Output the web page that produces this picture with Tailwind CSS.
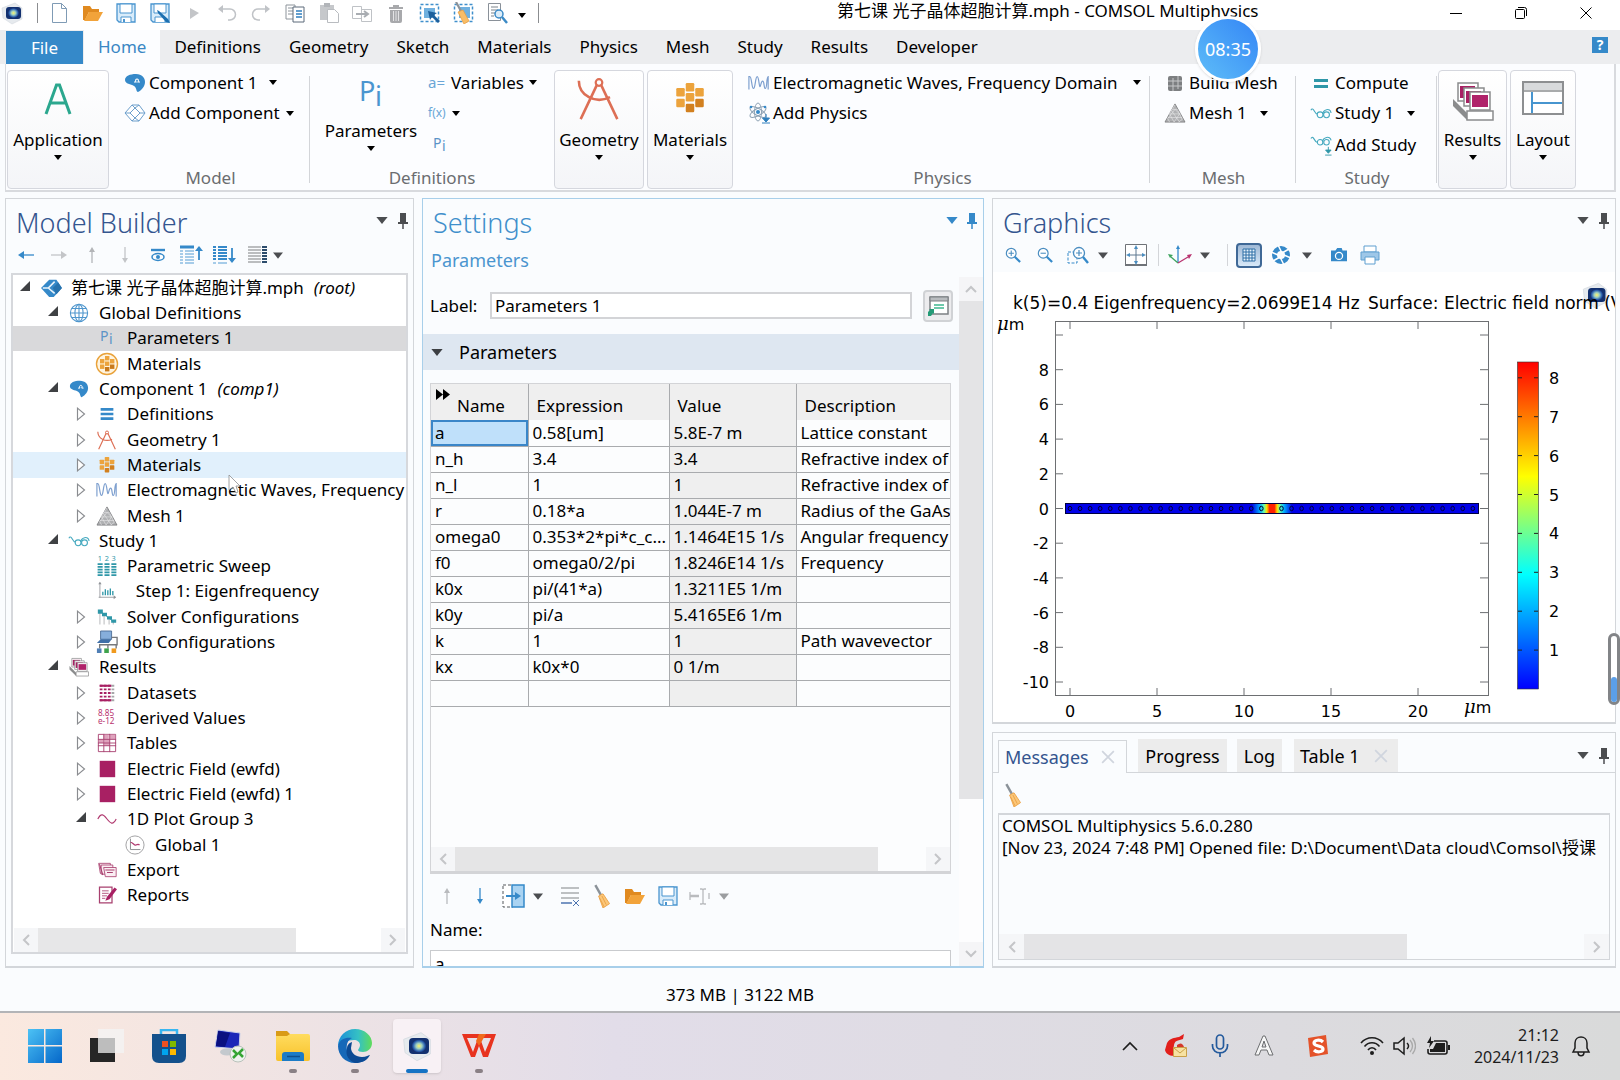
<!DOCTYPE html>
<html lang="en">
  <head>
    <meta charset="utf-8">
    <title>COMSOL Multiphysics</title>
    <script src="https://cdn.jsdelivr.net/npm/@tailwindcss/browser@4"></script>
  </head>

  <body class="relative min-h-screen flex flex-col overflow-x-hidden bg-[#fafcfe] text-black text-[17px] leading-[22px] font-['Noto_Sans','Noto_Sans_CJK_SC',sans-serif]">

    <!-- Gradients: kept out of the hidden sprite, they only paint from a rendered svg -->
    <svg class="absolute w-0 h-0">
      <defs>
        <linearGradient id="g-win" x1="0" y1="0" x2="1" y2="1"><stop offset="0" stop-color="#4cc2f5"/><stop offset="1" stop-color="#0567c9"/></linearGradient>
        <linearGradient id="g-edge" x1="0" y1="0" x2="1" y2="0"><stop offset="0" stop-color="#1b8fd8"/><stop offset="0.6" stop-color="#35c1c4"/><stop offset="1" stop-color="#5fdc5a"/></linearGradient>
        <linearGradient id="g-dir" x1="0" y1="0" x2="0" y2="1"><stop offset="0" stop-color="#ffdc5f"/><stop offset="1" stop-color="#f8c22b"/></linearGradient>
        <radialGradient id="g-core"><stop offset="0" stop-color="#fff36b"/><stop offset="0.4" stop-color="#9fd0c0"/><stop offset="0.8" stop-color="#2a5fb0"/><stop offset="1" stop-color="#14306e"/></radialGradient>
        <linearGradient id="g-jet" x1="0" y1="0" x2="0" y2="1">
          <stop offset="0" stop-color="#ff0000"/><stop offset="0.35" stop-color="#ffff00"/><stop offset="0.65" stop-color="#00ffff"/><stop offset="1" stop-color="#0000ff"/>
        </linearGradient>
        <linearGradient id="g-mode" x1="0" y1="0" x2="1" y2="0">
          <stop offset="0" stop-color="#0000e8"/><stop offset="0.2" stop-color="#00b0ff"/><stop offset="0.3" stop-color="#60ffb0"/><stop offset="0.37" stop-color="#ffe000"/><stop offset="0.44" stop-color="#ff2000"/>
          <stop offset="0.56" stop-color="#ff2000"/><stop offset="0.63" stop-color="#ffe000"/><stop offset="0.7" stop-color="#60ffb0"/><stop offset="0.8" stop-color="#00b0ff"/><stop offset="1" stop-color="#0000e8"/>
        </linearGradient>
      </defs>
    </svg>

    <!-- Icon sprite -->
    <svg class="hidden">
      <symbol id="caret" viewBox="0 0 8 5"><path d="M0 0h8L4 5z" fill="currentColor"/></symbol>
      <symbol id="pin" viewBox="0 0 12 16"><path d="M3 0h6v9h2v2H1V9h2z" fill="currentColor"/><path d="M6 11v5" stroke="currentColor" stroke-width="1.5"/></symbol>
      <symbol id="logo" viewBox="0 0 24 24"><path d="M2 7L15 2l7 5v11l-10 5L3 17z" fill="#e6eaee" stroke="#d3d9df" stroke-width=".6"/><rect x="6" y="6" width="15" height="12" rx="3" fill="#12306f"/><rect x="8" y="7" width="11" height="10" rx="2" fill="url(#g-core)"/></symbol>
      <symbol id="new" viewBox="0 0 22 22"><path d="M4.500 1.500h9l5 5v14h-14z" fill="#fff" stroke="#7f9bb5"/><path d="M13.500 1.500v5h5" fill="none" stroke="#7f9bb5"/></symbol>
      <symbol id="open" viewBox="0 0 22 22"><path d="M1 4h7l2 3h7v3H7l-4 8H1z" fill="#e08a20"/><path d="M7 10h14l-5 9H2z" fill="#f2a33a"/></symbol>
      <symbol id="save" viewBox="0 0 22 22"><path d="M2 2h18v18H4l-2-2z" fill="#d9ecfa" stroke="#4a95cf" stroke-width="1.300"/><path d="M5 2h12v9H5z" fill="#fff" stroke="#4a95cf"/><path d="M6 20v-5h10v5" fill="#fff" stroke="#4a95cf"/><path d="M8 17h2v3H8z" fill="#4a95cf"/></symbol>
      <symbol id="saveas" viewBox="0 0 22 22"><path d="M2 2h18v18H4l-2-2z" fill="#d9ecfa" stroke="#4a95cf" stroke-width="1.300"/><path d="M5 2h12v9H5z" fill="#fff" stroke="#4a95cf"/><path d="M6 20v-5h10v5" fill="#fff" stroke="#4a95cf"/><path d="M8 8l2 1 9 8 2 4-4-1-8-9z" fill="#1c6fb0"/></symbol>
      <symbol id="play" viewBox="0 0 22 22"><path d="M7 6l9 5-9 6z" fill="#c3c5c8"/></symbol>
      <symbol id="undo" viewBox="0 0 22 22"><path d="M3 7h11a5 5 0 0 1 0 11h-2" fill="none" stroke="#c0c3c7" stroke-width="1.500"/><path d="M7 3L2 7l5 4" fill="#c0c3c7"/></symbol>
      <symbol id="redo" viewBox="0 0 22 22"><path d="M19 7H8a5 5 0 0 0 0 11h2" fill="none" stroke="#c0c3c7" stroke-width="1.500"/><path d="M15 3l5 4-5 4" fill="#c0c3c7"/></symbol>
      <symbol id="copy" viewBox="0 0 22 22"><path d="M2 3h9v14H2z" fill="#fff" stroke="#8d949b"/><path d="M4 6h5M4 9h5M4 12h5" stroke="#8d949b"/><path d="M9 5h11v15H9z" fill="#fff" stroke="#5c6b7a"/><path d="M12 9h6M12 12h6M12 15h6" stroke="#2f7fbf" stroke-width="1.500"/></symbol>
      <symbol id="paste" viewBox="0 0 22 22"><path d="M2 3h14v15H2z" fill="#c6c8cb"/><path d="M6 1h6v4H6z" fill="#b2b5b9"/><path d="M9.500 7.500h7l4 4v9h-11z" fill="#fff" stroke="#b9bcc0"/></symbol>
      <symbol id="dup" viewBox="0 0 22 22"><path d="M1.500 4.500h9v12h-9zM10.500 7.500h10v12h-10z" fill="#fff" stroke="#bfc2c6"/><path d="M5 12h11M13 9l4 3-4 3" fill="none" stroke="#a9adb2" stroke-width="2"/></symbol>
      <symbol id="trash" viewBox="0 0 22 22"><path d="M4 5h14v2H4zM8 3h6v2H8z" fill="#a8a9ac"/><path d="M5 8h12v11a2 2 0 0 1-2 2H7a2 2 0 0 1-2-2z" fill="#a8a9ac"/><path d="M8.500 9v10M11 9v10M13.500 9v10" stroke="#e3e3e5"/></symbol>
      <symbol id="select" viewBox="0 0 22 22"><path d="M1.500 2.500h18v17h-18z" fill="#fff" stroke="#3f8fcc" stroke-width="1.500" stroke-dasharray="3 2"/><path d="M5 6h11v10H5z" fill="#6fb0df"/><path d="M9 9l9 2-3 2 6 6-2 2-6-6-2 3z" fill="#1c5f9c"/></symbol>
      <symbol id="clearsel" viewBox="0 0 22 22"><path d="M2.500 2.500h18v17h-18z" fill="#fff" stroke="#3f8fcc" stroke-width="1.500" stroke-dasharray="3 2"/><path d="M7 5h11v11H7z" fill="#6fb0df"/><path d="M4 0l5 9" stroke="#8b9299" stroke-width="2.200"/><path d="M6 10l5-2 6 11-5 3z" fill="#f9bd66" stroke="#eaa043" stroke-width=".8"/></symbol>
      <symbol id="find" viewBox="0 0 22 22"><path d="M2.500 1.500h12v17h-12z" fill="#fff" stroke="#8a9199"/><path d="M5 5h7M5 8h7M5 11h4M5 14h3" stroke="#7b838b"/><circle cx="13" cy="12" r="4" fill="#dcedf9" stroke="#3b8ac6" stroke-width="1.500"/><path d="M16 15l5 6" stroke="#3b8ac6" stroke-width="2.500"/></symbol>
      <symbol id="broom" viewBox="0 0 22 22"><path d="M4 1l5 9" stroke="#8b9299" stroke-width="2.200"/><path d="M7 11l4-2 6 9-6 4z" fill="#fbc77a" stroke="#eaa043" stroke-width=".8"/><path d="M8 13l4 8M10 11l4 8" stroke="#eaa043" stroke-width=".8"/></symbol>

      <symbol id="compasses" viewBox="0 0 24 24"><path d="M11 4L2 23M13 4l9 19" fill="none" stroke="#dd6f55" stroke-width="1.400"/><circle cx="12" cy="3" r="1.800" fill="none" stroke="#dd6f55" stroke-width="1.200"/><path d="M1 2c0 8 9 13 17 9" fill="none" stroke="#dd6f55" stroke-width="1.400"/></symbol>
      <symbol id="cubes" viewBox="0 0 24 24"><g fill="#eca33c"><rect x="8.600" y="0" width="6.800" height="6.800" rx="1"/><rect x="8.600" y="8" width="6.800" height="6.800" rx="1"/><rect x="1" y="4" width="6.800" height="6.800" rx="1"/><rect x="1" y="12.500" width="6.800" height="6.800" rx="1"/><rect x="16.200" y="4" width="6.800" height="6.800" rx="1"/></g><g fill="#d2801f"><rect x="16.200" y="12.500" width="6.800" height="6.800" rx="1"/><rect x="8.600" y="16.500" width="6.800" height="6.800" rx="1"/></g></symbol>
      <symbol id="globmat" viewBox="0 0 24 24"><circle cx="12" cy="12" r="10.500" fill="#fff4df" stroke="#e9a23a" stroke-width="1.400"/><g fill="#eca33c"><rect x="10" y="4" width="4.400" height="4.400"/><rect x="10" y="9.500" width="4.400" height="4.400"/><rect x="5" y="7" width="4.400" height="4.400"/><rect x="5" y="12.500" width="4.400" height="4.400"/><rect x="15" y="7" width="4.400" height="4.400"/></g><g fill="#c97a1c"><rect x="15" y="12.500" width="4.400" height="4.400"/><rect x="10" y="15" width="4.400" height="4.400"/></g></symbol>
      <symbol id="comp" viewBox="0 0 22 20"><path d="M1 7c0-4 5-6 11-6s9 4 9 8-3 8-7 10c-2 0-1-4-4-6S1 11 1 7z" fill="#3589c9"/><path d="M10 9h2c-2-4 4-4 2 0h2" fill="none" stroke="#fff" stroke-width="1.100"/></symbol>
      <symbol id="addcomp" viewBox="0 0 22 20"><path d="M1 10l7-8h7l6 8-6 8H8z" fill="#fff" stroke="#6d9fcc"/><path d="M1 10h5l5-5 5 5h5M6 10l5 5 5-5M8 2l3 3 4-3M8 18l3-3 4 3" fill="none" stroke="#6d9fcc"/></symbol>
      <symbol id="wave" viewBox="0 0 24 20"><path d="M1 17V3h1c2 0 2 13 4 13S8 3 10 3s2 11 3 11 1-6 3-6 1 8 3 8 1-13 3-13v14" fill="none" stroke="#7d9fcf" stroke-width="1.300"/></symbol>
      <symbol id="atom" viewBox="0 0 22 22"><g fill="none" stroke="#8fa3b5"><ellipse cx="10" cy="10" rx="3.500" ry="9"/><ellipse cx="10" cy="10" rx="3.500" ry="9" transform="rotate(60 10 10)"/><ellipse cx="10" cy="10" rx="3.500" ry="9" transform="rotate(120 10 10)"/></g><circle cx="10" cy="10" r="2" fill="#3589c9"/><circle cx="3" cy="5" r="1.300" fill="#3589c9"/><circle cx="17" cy="5" r="1.300" fill="#3589c9"/><path d="M18 12v6M14.500 16l3.500 4 3.500-4zM14 21h8" stroke="#2e7fbd" fill="#2e7fbd"/></symbol>
      <symbol id="brick" viewBox="0 0 22 20"><rect x="4" y="3" width="14" height="15" rx="2" fill="#7d7f81"/><path d="M4 8h14M4 13h14M9 5v13M14 3v13" stroke="#c7c8c9"/></symbol>
      <symbol id="mesh" viewBox="0 0 24 22"><path d="M12 1l11 20H1z" fill="#b0b1b3" stroke="#7f8082"/><path d="M9 7h6M6 12h12M4 16h16M12 2l-6 10 5 9 6-9-5-5-8 10 2 4M8 8l9 13M15 8l5 10-4 3" fill="none" stroke="#e6e6e7" stroke-width=".7"/></symbol>
      <symbol id="equals" viewBox="0 0 22 20"><path d="M4 7.500h14M4 13.500h14" stroke="#2f97a8" stroke-width="3"/></symbol>
      <symbol id="glasses" viewBox="0 0 24 20"><g fill="none" stroke="#45a9bf" stroke-width="1.200"><path d="M1 7c3-5 4 5 7 4"/><circle cx="11" cy="12" r="3.200"/><circle cx="18" cy="12" r="3.200"/><path d="M14 11c0-4 8-8 9-1"/></g></symbol>
      <symbol id="addstudy" viewBox="0 0 24 24"><g fill="none" stroke="#45a9bf" stroke-width="1.200"><path d="M1 5c3-5 4 5 7 4"/><circle cx="11" cy="9" r="3"/><circle cx="18" cy="9" r="3"/><path d="M14 8c0-4 8-7 9-1"/></g><path d="M20 14v5M17 17.500l3 3.500 3-3.500zM16.500 23h7" stroke="#2f97a8" fill="#2f97a8"/></symbol>
      <symbol id="results" viewBox="0 0 42 40"><path d="M1 18l14 14v7L1 25z" fill="#8b8c8d"/><path d="M15 30h26v9H15z" fill="#fff" stroke="#8b8c8d" stroke-width="1.500"/><path d="M6 2h20v18H6z" fill="#fff" stroke="#8b8c8d" stroke-width="1.500"/><path d="M8 5h15v12H8z" fill="#a82063"/><path d="M12 7h20v18H12z" fill="#fff" stroke="#8b8c8d" stroke-width="1.500"/><path d="M14 10h15v12H14z" fill="#a82063"/><path d="M18 11h20v18H18z" fill="#fff" stroke="#8b8c8d" stroke-width="1.500"/><path d="M20 14h16v12H20z" fill="#b0226a"/></symbol>
      <symbol id="layout" viewBox="0 0 42 34"><path d="M1 1h40v32H1z" fill="#fff" stroke="#8d8f91" stroke-width="2"/><path d="M2 2h38v7H2z" fill="#d8dadc"/><path d="M1 10h40" stroke="#8d8f91" stroke-width="1.500"/><path d="M10 11v21M10 22h30" stroke="#4795cf" stroke-width="2"/></symbol>

      <symbol id="root" viewBox="0 0 26 22"><path d="M2 11L11 2h8l6 9-9 10h-5z" fill="#3589c9"/><path d="M4 11h6l7-7M10 11l7 6" fill="none" stroke="#e8f3fb" stroke-width="1.800"/><path d="M15 11l6-6 4 6-6 7z" fill="#2772ad"/></symbol>
      <symbol id="globe" viewBox="0 0 22 22"><g fill="none" stroke="#4f96cd" stroke-width="1.200"><circle cx="11" cy="11" r="9.500"/><ellipse cx="11" cy="11" rx="4.500" ry="9.500"/><path d="M11 1.500v19M1.500 11h19M3 6h16M3 16h16"/></g></symbol>
      <symbol id="pi" viewBox="0 0 24 22"><text x="5" y="14" font-size="14" fill="#5b93c7">P</text><text x="14" y="17" font-size="14" fill="#5b93c7">i</text></symbol>
      <symbol id="defs" viewBox="0 0 22 22"><path d="M4 6h14M4 11h14M4 16h14" stroke="#3589c9" stroke-width="3"/></symbol>
      <symbol id="sweep" viewBox="0 0 24 24"><text x="2" y="7" font-size="8" fill="#2f97a8">1</text><text x="9.500" y="7" font-size="8" fill="#2f97a8">2</text><text x="17" y="7" font-size="8" fill="#2f97a8">3</text><path d="M4.500 9v14M12 9v14M19.500 9v14" stroke="#2f97a8" stroke-width="5.500" stroke-dasharray="1.800 1.200"/></symbol>
      <symbol id="eigen" viewBox="0 0 24 22"><path d="M3.500 1v18M2 18.500h20" stroke="#8f9296"/><path d="M20 16l3 2.500-3 2.500M1.500 3l2-3 2 3" fill="#8f9296"/><path d="M7 16v-4M10 16V9M13 16v-6M16 16V8M19 16v-5" stroke="#2f97a8" stroke-width="1.600"/></symbol>
      <symbol id="solver" viewBox="0 0 24 22"><path d="M3.500 4v16M8.500 8v12M14.500 12v8M19.500 16v4" stroke="#a9acb0"/><path d="M1 2h6v5H1zM6 6h6v4H6zM12 10h6v4h-6zM17 14h6v4h-6z" fill="#2f97a8"/><path d="M4 4l16 13" stroke="#2f97a8"/></symbol>
      <symbol id="job" viewBox="0 0 24 26"><path d="M5 1h12v9H5z" fill="#86aedb" stroke="#4e6f98"/><path d="M5 10h12l-3 4H1z" fill="#3f6fa8"/><path d="M17 8h6v8H4v4M13 16v4M22 16v4" fill="none" stroke="#77797c" stroke-width="1.500"/><path d="M1 20h5v5H1z" fill="#4f7fb5"/><path d="M9 20h5v5H9z" fill="#3fa34d"/><path d="M17 20h5v5h-5z" fill="#f09a1e"/></symbol>
      <symbol id="datasets" viewBox="0 0 22 22"><path d="M3 2h13v2H3zM3 18h13v2H3z" fill="#a82063"/><path d="M4.500 2v18M9 2v18M13.500 2v18" stroke="#a82063" stroke-width="3" stroke-dasharray="2 2"/><path d="M17.500 2v18" stroke="#a5a6a8" stroke-width="3" stroke-dasharray="2 2"/></symbol>
      <symbol id="derived" viewBox="0 0 24 22"><text x="2" y="9" font-size="9" fill="#b8326f">8.85</text><text x="2" y="18" font-size="9" fill="#b8326f">e-12</text></symbol>
      <symbol id="tables" viewBox="0 0 22 22"><path d="M1.500 1.500h19v19h-19z" fill="#fff" stroke="#a8406f"/><path d="M7 2h6v5H7zM2 7h5v4H2zM8 7h6v7H8zM14 2h6v5h-6z" fill="#dfa3bd"/><path d="M7.500 1v20M14 1v20M1 7h20M1 14h20M1 11h20" stroke="#a8406f"/></symbol>
      <symbol id="square" viewBox="0 0 22 22"><path d="M3 2h17v18H3z" fill="#a82063"/></symbol>
      <symbol id="sine" viewBox="0 0 24 22"><path d="M1 11c4-8 7-5 11 0s7 8 11 0" fill="none" stroke="#b0396f" stroke-width="1.400"/></symbol>
      <symbol id="global" viewBox="0 0 22 22"><circle cx="11" cy="11" r="10" fill="#fff" stroke="#9a9b9d"/><path d="M6 4v12h11" fill="none" stroke="#85878a"/><path d="M6 8c3 0 4 4 6 3s3-1 4 0" fill="none" stroke="#b0396f" stroke-width="1.300"/></symbol>
      <symbol id="export" viewBox="0 0 24 20"><g fill="#fbeef3" stroke="#a8406f"><path d="M2 2h14v12H4z"/><path d="M5 4h14v11H5z"/><path d="M8 7h15v11H10z"/></g><path d="M3 3l4 13M10 10h11M12 13h7" stroke="#a8406f" stroke-width="1.300"/></symbol>
      <symbol id="reports" viewBox="0 0 24 22"><path d="M3 1.500h15v19H3z" fill="#fff" stroke="#a8406f" stroke-width="1.500"/><path d="M6 6h8M6 9h8M6 12h6M6 15h4" stroke="#a8406f"/><path d="M10 18l2-5L21 2l3 2-9 12z" fill="#a82063"/></symbol>

      <symbol id="aleft" viewBox="0 0 18 18"><path d="M17 9H5" stroke="currentColor" stroke-width="1.300"/><path d="M7 5L1 9l6 4z" fill="currentColor"/></symbol>
      <symbol id="aup" viewBox="0 0 18 18"><path d="M9 17V4" stroke="currentColor" stroke-width="1.300"/><path d="M6 6l3-5 3 5z" fill="currentColor"/></symbol>
      <symbol id="eye" viewBox="0 0 18 18"><path d="M2 4h14" stroke="#3589c9" stroke-width="2.400"/><ellipse cx="9" cy="11" rx="6" ry="3.500" fill="none" stroke="#3589c9" stroke-width="1.500"/><circle cx="9" cy="11" r="2" fill="#3589c9"/></symbol>
      <symbol id="collapse" viewBox="0 0 24 20"><path d="M1 2h14" stroke="#3589c9" stroke-width="3"/><path d="M1 6h3M1 9h3M1 12h3M1 15h3M1 18h3M6 6h9M6 9h9M6 12h9M6 15h9M6 18h9" stroke="#8bbce2" stroke-width="1.500"/><path d="M20 15V4" stroke="#3589c9" stroke-width="1.800"/><path d="M16 6l4-5 4 5z" fill="#3589c9"/></symbol>
      <symbol id="expand" viewBox="0 0 24 20"><path d="M1 2h3M6 2h9M1 5h3M6 5h9M1 8h3M6 8h9M1 11h3M6 11h9M1 14h3M6 14h9" stroke="#3589c9" stroke-width="2"/><path d="M1 18h3M6 18h9" stroke="#8bbce2" stroke-width="1.500"/><path d="M20 3v12" stroke="#3589c9" stroke-width="1.800"/><path d="M16 13l4 5 4-5z" fill="#3589c9"/></symbol>
      <symbol id="cols" viewBox="0 0 22 20"><path d="M2 2h13M2 5h13M2 8h13M2 11h13M2 14h13M2 17h13" stroke="#a6a8aa" stroke-width="1.300"/><path d="M16 2h5M16 5h5M16 8h5M16 11h5M16 14h5M16 17h5" stroke="#2c4c6c" stroke-width="2"/></symbol>

      <symbol id="zoomin" viewBox="0 0 18 18"><circle cx="7" cy="7" r="5.500" fill="#fff" stroke="#4a8dc0" stroke-width="1.300"/><path d="M4 7h6M7 4v6" stroke="#4a8dc0" stroke-width="1.200"/><path d="M11 11l6 6" stroke="#3589c9" stroke-width="2.400"/></symbol>
      <symbol id="zoomout" viewBox="0 0 18 18"><circle cx="7" cy="7" r="5.500" fill="#fff" stroke="#4a8dc0" stroke-width="1.300"/><path d="M4 7h6" stroke="#4a8dc0" stroke-width="1.200"/><path d="M11 11l6 6" stroke="#3589c9" stroke-width="2.400"/></symbol>
      <symbol id="zoombox" viewBox="0 0 22 18"><path d="M1 6h9v11H1z" fill="none" stroke="#3589c9" stroke-dasharray="3 1.500"/><circle cx="12" cy="7" r="5.500" fill="#fff" stroke="#4a8dc0" stroke-width="1.300"/><path d="M9 7h6M12 4v6" stroke="#4a8dc0" stroke-width="1.200"/><path d="M16 11l5 6" stroke="#3589c9" stroke-width="2.400"/></symbol>
      <symbol id="extents" viewBox="0 0 22 22"><path d="M.5.500h21v21H.5z" fill="#fff" stroke="#6f7378"/><path d="M0 21h22" stroke="#6f7378" stroke-width="2"/><path d="M11 3v16M3 11h16" stroke="#5f7890"/><path d="M9 5l2-4 2 4zM9 17l2 4 2-4zM5 9l-4 2 4 2zM17 9l4 2-4 2z" fill="#4a8dc0"/></symbol>
      <symbol id="axes" viewBox="0 0 24 20"><path d="M10 18V3" stroke="#3589c9" stroke-width="1.300"/><path d="M8 4l2-4 2 4z" fill="#3589c9"/><path d="M10 18L3 12" stroke="#3da35d" stroke-width="1.300"/><path d="M0 9l5 1-3 3z" fill="#3da35d"/><path d="M10 18l10-6" stroke="#b8326f" stroke-width="1.300"/><path d="M24 9l-5 1 2 4z" fill="#b8326f"/></symbol>
      <symbol id="grid" viewBox="0 0 16 16"><path d="M2 2h12v12H2z" fill="#e7f2fb"/><path d="M2 2v12M5 2v12M8 2v12M11 2v12M14 2v12M2 2h12M2 5h12M2 8h12M2 11h12M2 14h12" stroke="#2c6ea6"/></symbol>
      <symbol id="aperture" viewBox="0 0 20 20"><circle cx="10" cy="10" r="6.500" fill="none" stroke="#3589c9" stroke-width="5"/><path d="M7 0l4 8M18 4l-7 4M20 13l-7-3M13 20l-4-8M2 16l7-4M0 7l7 3" stroke="#fff" stroke-width="1.500"/></symbol>
      <symbol id="camera" viewBox="0 0 20 18"><path d="M1 4h5l2-3h5l1 3h5v12H1z" fill="#3589c9"/><circle cx="10" cy="10" r="4" fill="#3589c9" stroke="#fff" stroke-width="1.400"/></symbol>
      <symbol id="printer" viewBox="0 0 20 20"><path d="M4 1h12v6H4z" fill="#fff" stroke="#5f9fd0"/><path d="M1 7h18v8H1z" fill="#9ec7e8" stroke="#5f9fd0"/><path d="M5 12h10v7H5z" fill="#fff" stroke="#5f9fd0"/></symbol>

      <symbol id="labelbtn" viewBox="0 0 22 22"><path d="M3 2h18v17H3z" fill="#fff" stroke="#7c8084" stroke-width="1.500"/><path d="M3 2h18v4H3z" fill="#b9bcbf" stroke="#7c8084"/><path d="M7 10h10M7 13h10" stroke="#3fb890" stroke-width="1.500"/><path d="M1 21v-4l2-2-1-1h5v5l-1-1-2 3z" fill="#249b77"/></symbol>
      <symbol id="moveto" viewBox="0 0 24 24"><path d="M2 1h10v22H2z" fill="#fff" stroke="#55585c" stroke-dasharray="3 2"/><path d="M11 1h12v22H11z" fill="#a9d3f2" stroke="#3589c9" stroke-width="1.500"/><path d="M5 12h10" stroke="#3589c9" stroke-width="2"/><path d="M14 8l6 4-6 4z" fill="#3589c9"/></symbol>
      <symbol id="clearrows" viewBox="0 0 22 20"><path d="M2 2h18M2 7h18M2 12h18" stroke="#a9acaf" stroke-width="1.500"/><path d="M2 17h11" stroke="#4d74b0" stroke-width="1.500"/><path d="M14 14l6 6M20 14l-6 6" stroke="#4d74b0"/></symbol>
      <symbol id="tidy" viewBox="0 0 22 20"><path d="M1 6v8M20 7v6" stroke="#b9bbbe" stroke-width="1.300"/><path d="M1 10h9" stroke="#b9bbbe" stroke-width="2.500"/><path d="M11 3h2l1 1 1-1h2M14 4v13M11 18h2l1-1 1 1h2" fill="none" stroke="#b9bbbe" stroke-width="1.300"/></symbol>

      <symbol id="w-start" viewBox="0 0 34 34"><path d="M0 0h16v16H0zM17.500 0H34v16H17.500zM0 17.500h16V34H0zM17.500 17.500H34V34H17.500z" fill="url(#g-win)"/></symbol>
      <symbol id="w-tasks" viewBox="0 0 34 34"><path d="M0 9h25v24H0z" fill="#262626"/><path d="M8 0h26v24H8z" fill="#f4f4f4" opacity=".8"/><path d="M8 9h17v15H8z" fill="#bdbdbd"/></symbol>
      <symbol id="w-store" viewBox="0 0 34 34"><path d="M9 5V1h16v4" fill="none" stroke="#38b6f1" stroke-width="2.500"/><path d="M0 5h34v22q0 7-7 7H7q-7 0-7-7z" fill="#14518c"/><path d="M10 12h6v6h-6z" fill="#f05022"/><path d="M18 12h6v6h-6z" fill="#7fba00"/><path d="M10 20h6v6h-6z" fill="#00a4ef"/><path d="M18 20h6v6h-6z" fill="#ffb900"/></symbol>
      <symbol id="w-rdp" viewBox="0 0 34 34"><path d="M4 1l22 3-1 16-24-2z" fill="#1a27b8" stroke="#c9d0e8"/><path d="M4 2l12 2-5 14-9-1z" fill="#0a1080"/><ellipse cx="13" cy="23" rx="7" ry="3.500" fill="#c4c9ce"/><circle cx="24" cy="25" r="8" fill="#eef2ee" stroke="#b9c2bb"/><path d="M19 21l4 4-4 4M29 20l-4 4 4 4" fill="none" stroke="#35a534" stroke-width="2.500"/></symbol>
      <symbol id="w-files" viewBox="0 0 34 30"><path d="M0 0h11l3 3h8v6H0z" fill="#d99b16"/><path d="M0 5h11l3-2h18q2 0 2 2v23q0 2-2 2H2q-2 0-2-2z" fill="url(#g-dir)"/><path d="M6 30v-6q0-3 3-3h16q3 0 3 3v6z" fill="#1c7bc6"/><path d="M11 25.500h13" stroke="#0e4f8c" stroke-width="1.500"/></symbol>
      <symbol id="w-edge" viewBox="0 0 34 34"><path d="M0 17C0 7 8 0 17 0c10 0 17 7 17 14 0 6-5 9-9 9-3 0-5-1-5-2 1-2 2-3 2-5 0-3-3-5-6-5C9 11 2 14 0 17z" fill="url(#g-edge)"/><path d="M0 17C2 9 9 8 14 9c-4 2-6 6-5 12 1 5 6 9 12 10 5 0 8-2 10-4-3 5-8 7-14 7C7 34 0 26 0 17z" fill="#1668b8"/><path d="M13 19c0 5 5 9 11 9 4 0 7-2 8-2-3 6-9 8-15 8-6-2-10-8-8-14 0-4 2-6 5-7z" fill="#0c4a94"/></symbol>
      <symbol id="w-wps" viewBox="0 0 34 24"><path d="M0 0h34l-8 23h-5l-4-11-4 11H9zM5 4l6 14 5-14zM18 4l5 14 6-14z" fill="#e8331f" fill-rule="evenodd"/><path d="M17 0h7l-7 12-3-5z" fill="#f06b1c"/></symbol>
      <symbol id="t-red" viewBox="0 0 22 24"><path d="M2 9c3-5 7-5 12-6l5-3-1 5c-7 2-8 2-9 6-1 5 1 9 4 10-6 2-12 0-13-5z" fill="#e21f1b"/><path d="M12 11q5-4 7 2h-7z" fill="#d4382c"/><path d="M8.500 13.500h13v9h-13z" fill="#f7e2a2" stroke="#c9a048"/><path d="M9 14l6 5 6-5" fill="none" stroke="#c9a048"/></symbol>
      <symbol id="t-mic" viewBox="0 0 18 24"><rect x="5.500" y="1" width="7" height="14" rx="3.500" fill="none" stroke="#245a9c" stroke-width="1.700"/><path d="M1.500 10v2c0 9 15 9 15 0v-2M9 19v4" fill="none" stroke="#245a9c" stroke-width="1.700"/></symbol>
      <symbol id="t-font" viewBox="0 0 20 22"><path d="M1 20L9 1h2l8 19h-4l-2-5H7l-2 5zM8 12h4l-2-6z" fill="#f7f7f7" stroke="#6c6e70"/></symbol>
      <symbol id="t-sogou" viewBox="0 0 24 24"><path d="M2 4l18-3 2 19-18 3z" fill="#e4532a"/><path d="M17 8c-3-3-9-2-9 1 0 4 9 2 9 6 0 3-6 4-9 1" fill="none" stroke="#fff" stroke-width="3.200"/></symbol>
      <symbol id="t-wifi" viewBox="0 0 24 20"><g fill="none" stroke="#1d1d1d" stroke-width="1.600"><path d="M1 7c6-7 16-7 22 0M4.500 10.500c4-5 11-5 15 0M8 14c2-3 6-3 8 0"/></g><circle cx="12" cy="17" r="2" fill="#1d1d1d"/></symbol>
      <symbol id="t-vol" viewBox="0 0 24 20"><path d="M2 7h4l6-5v16l-6-5H2z" fill="none" stroke="#1d1d1d" stroke-width="1.500"/><path d="M15 7q3 3 0 6" fill="none" stroke="#1d1d1d" stroke-width="1.500"/><path d="M18 4q5 6 0 12M20.500 2q6 8 0 16" fill="none" stroke="#a9a9a9" stroke-width="1.300"/></symbol>
      <symbol id="t-bat" viewBox="0 0 24 20"><path d="M8 5h11q2 0 2 2v9q0 2-2 2H4q-2 0-2-2v-3" fill="none" stroke="#1d1d1d" stroke-width="1.600"/><path d="M10 7h9v9H4v-3h3z" fill="#1d1d1d"/><path d="M22 9h2v5h-2z" fill="#1d1d1d"/><path d="M5 0L1 7h3l-1 5 5-7H5z" fill="#1d1d1d"/></symbol>
      <symbol id="t-bell" viewBox="0 0 20 22"><path d="M2 17l2-4V8c0-8 12-8 12 0v5l2 4zM7 17c0 5 6 5 6 0" fill="none" stroke="#1d1d1d" stroke-width="1.500"/></symbol>
    </svg>

    <!-- Title bar -->
    <header class="flex items-center h-[30px] bg-white">
      <svg class="w-6 h-6 -mt-1"><use href="#logo"/></svg>
      <span class="w-px h-5 ml-[13px] -mt-1 bg-[#8b8d90]"></span>
      <div id="quick" class="flex w-[472px] ml-1"></div>
      <button aria-label="More commands" class="w-4 flex justify-center"><svg class="w-2 h-[5px]"><use href="#caret"/></svg></button>
      <span class="w-px h-5 ml-2 -mt-1 bg-[#8b8d90]"></span>
      <h1 class="flex-1 pl-[298px] -mt-2 whitespace-nowrap">第七课 光子晶体超胞计算.mph - COMSOL Multiphysics</h1>
      <div class="flex -mt-1 mr-[2px]">
        <button aria-label="Minimize" class="w-[65px] flex justify-center"><svg class="w-3 h-3" viewBox="0 0 12 12"><path d="M0 6.500h12" stroke="#000"/></svg></button>
        <button aria-label="Restore" class="w-[65px] flex justify-center"><svg class="w-3 h-3" viewBox="0 0 12 12" fill="none" stroke="#000"><rect x=".5" y="2.500" width="9" height="9" rx="1"/><path d="M3 .5h6.500q2 0 2 2V9"/></svg></button>
        <button aria-label="Close" class="w-[65px] flex justify-center"><svg class="w-3 h-3" viewBox="0 0 12 12"><path d="M.5.500l11 11M11.500.5l-11 11" stroke="#000"/></svg></button>
      </div>
    </header>

    <!-- Ribbon tabs -->
    <nav class="flex items-stretch h-[34px] pl-[6px] bg-[#ecedef] leading-[32px]">
      <button class="w-[77px] mr-px mt-px bg-[#3589c9] text-white">File</button>
      <button class="px-[14px] bg-[#fcfdff] text-[#3a87c4]">Home</button>
      <button class="px-[14px]">Definitions</button>
      <button class="px-[14px]">Geometry</button>
      <button class="px-[14px]">Sketch</button>
      <button class="px-[14px]">Materials</button>
      <button class="px-[14px]">Physics</button>
      <button class="px-[14px]">Mesh</button>
      <button class="px-[14px]">Study</button>
      <button class="px-[14px]">Results</button>
      <button class="px-[14px]">Developer</button>
      <button aria-label="Help" class="ml-auto mr-3 mt-[7px] w-4 h-4 bg-[#3589c9] text-white text-sm leading-4 font-bold">?</button>
    </nav>

    <!-- Ribbon -->
    <section class="flex items-stretch h-32 ml-[5px] mr-1 pl-px pt-[6px] pb-px bg-[#fcfdff] border-l border-b-2 border-r-2 border-[#d8dade]">
      <button class="w-[102px] mr-px flex flex-col items-center pt-3 rounded border border-[#d5d7de] bg-linear-to-b from-white to-[#f4f5f8]">
        <svg class="w-8 h-8" viewBox="0 0 32 32"><path d="M4 31L14.500 2h3L28 31M8 20h16" fill="none" stroke="#2ba78e" stroke-width="3"/></svg>
        <span class="mt-[14px]">Application</span>
        <svg class="w-2 h-[5px] mt-1"><use href="#caret"/></svg>
      </button>

      <div class="w-[199px] flex flex-col pl-[14px]">
        <button class="flex items-center gap-[3px] h-[25px]"><svg class="w-[22px] h-5"><use href="#comp"/></svg>Component 1<svg class="w-2 h-[5px] ml-2"><use href="#caret"/></svg></button>
        <button class="flex items-center gap-[3px] h-9"><svg class="w-[22px] h-5"><use href="#addcomp"/></svg>Add Component<svg class="w-2 h-[5px] ml-[3px]"><use href="#caret"/></svg></button>
        <span class="mt-auto pr-3 text-center text-[#6b6d70]">Model</span>
      </div>
      <span class="w-px my-[6px] bg-[#d3d5d9]"></span>

      <div class="w-[244px] flex flex-col pl-4">
        <div class="flex">
          <button class="w-[90px] flex flex-col items-center pt-1">
            <svg class="w-8 h-10 overflow-visible" viewBox="0 0 32 40"><text x="4" y="27" font-size="27" fill="#4a95cf">P</text><text x="20" y="32" font-size="27" fill="#4a95cf">i</text></svg>
            <span class="mt-[6px]">Parameters</span>
            <svg class="w-2 h-[5px] mt-1"><use href="#caret"/></svg>
          </button>
          <div class="flex flex-col pl-[12px]">
            <button class="flex items-center gap-[5px] h-[25px]"><svg class="w-[18px] h-4 overflow-visible" viewBox="0 0 18 16"><text x="0" y="13" font-size="15" fill="#6aa6d6">a=</text></svg>Variables<svg class="w-2 h-[5px]"><use href="#caret"/></svg></button>
            <button aria-label="Functions" class="flex items-center gap-1 h-9"><svg class="w-5 h-4 overflow-visible" viewBox="0 0 20 16"><text x="0" y="12" font-size="12" fill="#6aa6d6">f(x)</text></svg><svg class="w-2 h-[5px]"><use href="#caret"/></svg></button>
            <button aria-label="Parameter case" class="flex items-center h-[27px]"><svg class="w-6 h-[22px]"><use href="#pi"/></svg></button>
          </div>
        </div>
        <span class="mt-auto pr-4 text-center text-[#6b6d70]">Definitions</span>
      </div>

      <button class="w-[90px] mr-[3px] flex flex-col items-center pt-[6px] rounded border border-[#d5d7de] bg-linear-to-b from-white to-[#f4f5f8]">
        <svg class="w-11 h-11"><use href="#compasses"/></svg>
        <span class="mt-2">Geometry</span>
        <svg class="w-2 h-[5px] mt-1"><use href="#caret"/></svg>
      </button>
      <button class="w-[86px] mr-[3px] flex flex-col items-center pt-3 rounded border border-[#d5d7de] bg-linear-to-b from-white to-[#f4f5f8]">
        <svg class="w-[30px] h-[30px]"><use href="#cubes"/></svg>
        <span class="mt-4">Materials</span>
        <svg class="w-2 h-[5px] mt-1"><use href="#caret"/></svg>
      </button>

      <div class="w-[413px] flex flex-col pl-3">
        <button class="flex items-center gap-[3px] h-[25px] whitespace-nowrap"><svg class="w-[22px] h-5"><use href="#wave"/></svg>Electromagnetic Waves, Frequency Domain<svg class="w-2 h-[5px] ml-3"><use href="#caret"/></svg></button>
        <button class="flex items-center gap-[3px] h-9"><svg class="w-[22px] h-[22px]"><use href="#atom"/></svg>Add Physics</button>
        <span class="mt-auto pr-3 text-center text-[#6b6d70]">Physics</span>
      </div>
      <span class="w-px my-[6px] bg-[#d3d5d9]"></span>

      <div class="w-[145px] flex flex-col pl-[14px]">
        <button class="flex items-center gap-[3px] h-[25px]"><svg class="w-[22px] h-5"><use href="#brick"/></svg>Build Mesh</button>
        <button class="flex items-center gap-[3px] h-9"><svg class="w-[22px] h-5"><use href="#mesh"/></svg>Mesh 1<svg class="w-2 h-[5px] ml-[10px]"><use href="#caret"/></svg></button>
        <span class="mt-auto pr-3 text-center text-[#6b6d70]">Mesh</span>
      </div>
      <span class="w-px my-[6px] bg-[#d3d5d9]"></span>

      <div class="w-[140px] flex flex-col pl-[14px]">
        <button class="flex items-center gap-[3px] h-[25px]"><svg class="w-[22px] h-5"><use href="#equals"/></svg>Compute</button>
        <button class="flex items-center gap-[3px] h-9"><svg class="w-[22px] h-5"><use href="#glasses"/></svg>Study 1<svg class="w-2 h-[5px] ml-[10px]"><use href="#caret"/></svg></button>
        <button class="flex items-center gap-[3px] h-[27px]"><svg class="w-[22px] h-[22px]"><use href="#addstudy"/></svg>Add Study</button>
        <span class="mt-auto pr-3 text-center text-[#6b6d70]">Study</span>
      </div>
      <span class="w-px my-[6px] mr-px bg-[#d3d5d9]"></span>

      <button class="w-[69px] mr-[3px] flex flex-col items-center pt-[10px] rounded border border-[#d5d7de] bg-linear-to-b from-white to-[#f4f5f8]">
        <svg class="w-[42px] h-10"><use href="#results"/></svg>
        <span class="mt-2">Results</span>
        <svg class="w-2 h-[5px] mt-1"><use href="#caret"/></svg>
      </button>
      <button class="w-[66px] flex flex-col items-center pt-[10px] rounded border border-[#d5d7de] bg-linear-to-b from-white to-[#f4f5f8]">
        <svg class="w-[42px] h-[34px]"><use href="#layout"/></svg>
        <span class="mt-[14px]">Layout</span>
        <svg class="w-2 h-[5px] mt-1"><use href="#caret"/></svg>
      </button>
    </section>

    <!-- Workspace -->
    <main class="flex-1 grid grid-cols-[409fr_562fr_624fr] gap-2 pl-[5px] pr-1 pt-[6px]">

      <!-- Model Builder -->
      <section class="min-w-0 flex flex-col bg-[#fafcfe] border border-b-2 border-[#d3d6da]">
        <div class="flex items-center h-[43px] pl-[10px] pr-1 gap-[9px] text-[#4b4d50]">
          <h2 class="flex-1 pt-1 text-[27px] leading-9 font-light text-[#34558f]">Model Builder</h2>
          <svg class="w-3 h-[7px]"><use href="#caret"/></svg>
          <svg class="w-3 h-4"><use href="#pin"/></svg>
        </div>
        <div id="treebar" class="flex items-center h-[26px] pl-[3px]"></div>
        <div class="flex-1 flex flex-col mx-[5px] mt-[5px] mb-3 bg-white border-2 border-[#d6d8dc]">
          <ul id="tree" class="grid auto-rows-fr h-[633px] overflow-hidden"></ul>
          <div class="mt-auto flex h-6 mx-px">
            <span class="w-6 flex items-center justify-center bg-[#f5f6f8]"><svg class="w-2 h-3" viewBox="0 0 8 12"><path d="M7 1L2 6l5 5" fill="none" stroke="#c4c5c8" stroke-width="2"/></svg></span>
            <span class="w-[258px] bg-[#e7e7e8]"></span>
            <span class="flex-1"></span>
            <span class="w-6 flex items-center justify-center bg-[#f5f6f8]"><svg class="w-2 h-3" viewBox="0 0 8 12"><path d="M1 1l5 5-5 5" fill="none" stroke="#c4c5c8" stroke-width="2"/></svg></span>
          </div>
        </div>
      </section>

      <!-- Settings -->
      <section class="min-w-0 flex flex-col bg-[#fafcfe] border border-b-2 border-[#a8cfea]">
        <div class="flex items-center h-[43px] pl-[10px] pr-[5px] gap-2 text-[#3589c9]">
          <h2 class="flex-1 pt-1 text-[27px] leading-9 font-light text-[#3f8fcb]">Settings</h2>
          <svg class="w-3 h-[7px]"><use href="#caret"/></svg>
          <svg class="w-3 h-4"><use href="#pin"/></svg>
        </div>
        <p class="h-[35px] pl-2 pt-1 text-lg text-[#4a95cf]">Parameters</p>
        <div class="flex">
          <div class="flex-1 min-w-0">
            <div class="flex items-center h-[57px] pl-[7px] pr-[6px]">
              <label for="label" class="w-[60px]">Label:</label>
              <input id="label" value="Parameters 1" class="flex-1 min-w-0 h-[27px] px-[3px] bg-white border-2 border-[#d3d4d7]">
              <button aria-label="Rename" class="ml-[11px] w-[30px] h-8 flex items-center justify-center rounded border-2 border-[#d0d2d5] bg-[#ececee]"><svg class="w-[22px] h-[22px]"><use href="#labelbtn"/></svg></button>
            </div>
            <h3 class="flex items-center h-9 pl-2 gap-4 bg-[#dee7f1] text-lg"><svg class="w-3 h-[7px] text-[#3c3f43]"><use href="#caret"/></svg>Parameters</h3>
            <div class="mt-[13px] ml-[7px] mr-2 h-[491px] flex flex-col bg-[#fcfdfe] border border-b-3 border-[#d3d4d7]">
              <table class="w-full table-fixed border-collapse">
                <colgroup><col class="w-[97px]"><col class="w-[141px]"><col class="w-[127px]"><col></colgroup>
                <thead>
                  <tr class="h-9 bg-[#efefef] text-left align-bottom">
                    <th class="relative p-0 pl-[26px] pb-[3px] font-normal">Name<svg class="absolute left-[5px] top-[5px] w-[14px] h-[11px]" viewBox="0 0 14 11"><path d="M0 0l7 5.500L0 11zM7 0l7 5.500L7 11z"/></svg></th>
                    <th class="p-0 pl-2 pb-[3px] font-normal border-l border-[#a9abae]">Expression</th>
                    <th class="p-0 pl-2 pb-[3px] font-normal border-l border-[#a9abae]">Value</th>
                    <th class="p-0 pl-2 pb-[3px] font-normal border-l border-[#a9abae]">Description</th>
                  </tr>
                </thead>
                <tbody id="params"></tbody>
              </table>
              <div class="mt-auto flex h-6">
                <span class="w-6 flex items-center justify-center bg-[#f5f6f8]"><svg class="w-2 h-3" viewBox="0 0 8 12"><path d="M7 1L2 6l5 5" fill="none" stroke="#c4c5c8" stroke-width="2"/></svg></span>
                <span class="w-[423px] bg-[#e5e5e6]"></span>
                <span class="flex-1"></span>
                <span class="w-6 flex items-center justify-center bg-[#f5f6f8]"><svg class="w-2 h-3" viewBox="0 0 8 12"><path d="M1 1l5 5-5 5" fill="none" stroke="#c4c5c8" stroke-width="2"/></svg></span>
              </div>
            </div>
            <div class="flex items-center h-11 pl-[15px] text-[#4b4d50]">
              <button aria-label="Move up" class="mr-[15px] text-[#b9bbbe]"><svg class="w-[18px] h-5"><use href="#aup"/></svg></button>
              <button aria-label="Move down" class="mr-3 text-[#3589c9]"><svg class="w-[18px] h-5 rotate-180"><use href="#aup"/></svg></button>
              <button aria-label="Move to" class="mr-2"><svg class="w-6 h-6"><use href="#moveto"/></svg></button>
              <svg class="w-[10px] h-[7px] mr-4"><use href="#caret"/></svg>
              <button aria-label="Clear rows" class="mr-[10px]"><svg class="w-[22px] h-5"><use href="#clearrows"/></svg></button>
              <button aria-label="Clear table" class="mr-[9px]"><svg class="w-6 h-6"><use href="#broom"/></svg></button>
              <button aria-label="Load" class="mr-[11px]"><svg class="w-[22px] h-[22px]"><use href="#open"/></svg></button>
              <button aria-label="Save" class="mr-[10px]"><svg class="w-[22px] h-[22px]"><use href="#save"/></svg></button>
              <button aria-label="Tidy" class="mr-2"><svg class="w-[22px] h-5"><use href="#tidy"/></svg></button>
              <svg class="w-[10px] h-[7px] text-[#9b9da0]"><use href="#caret"/></svg>
            </div>
            <label for="pname" class="block h-[26px] pl-[7px] pt-px">Name:</label>
            <div class="mt-[6px] ml-[7px] mr-2 h-4 overflow-hidden"><input id="pname" value="a" class="block w-full h-[27px] px-1 bg-white border border-[#c9cbce]"></div>
          </div>
          <div class="w-6 flex flex-col bg-[#fdfdfe]">
            <span class="h-6 flex items-center justify-center bg-[#f5f5f7]"><svg class="w-3 h-2" viewBox="0 0 12 8"><path d="M1 7l5-5 5 5" fill="none" stroke="#c4c5c8" stroke-width="2"/></svg></span>
            <span class="h-[498px] bg-[#e4e4e6]"></span>
            <span class="mt-auto h-6 flex items-center justify-center bg-[#f5f5f7]"><svg class="w-3 h-2" viewBox="0 0 12 8"><path d="M1 1l5 5 5-5" fill="none" stroke="#c4c5c8" stroke-width="2"/></svg></span>
          </div>
        </div>
      </section>

      <div class="min-w-0 flex flex-col gap-2">
        <!-- Graphics -->
        <section class="flex flex-col bg-[#fafcfe] border border-b-2 border-[#d3d6da]">
          <div class="flex items-center h-[43px] pl-[10px] pr-[5px] gap-[9px] text-[#4b4d50]">
            <h2 class="flex-1 pt-1 text-[27px] leading-9 font-light text-[#34558f]">Graphics</h2>
            <svg class="w-3 h-[7px]"><use href="#caret"/></svg>
            <svg class="w-3 h-4"><use href="#pin"/></svg>
          </div>
          <div class="flex items-center h-[26px] mb-1 pl-3 text-[#4b4d50]">
            <button aria-label="Zoom in" class="mr-4"><svg class="w-4 h-4"><use href="#zoomin"/></svg></button>
            <button aria-label="Zoom out" class="mr-[14px]"><svg class="w-4 h-4"><use href="#zoomout"/></svg></button>
            <button aria-label="Zoom box" class="mr-[9px]"><svg class="w-[22px] h-[18px]"><use href="#zoombox"/></svg></button>
            <svg class="w-[10px] h-[7px] mr-[17px]"><use href="#caret"/></svg>
            <button aria-label="Zoom extents" class="mr-[11px]"><svg class="w-[22px] h-[22px]"><use href="#extents"/></svg></button>
            <span class="w-px h-[22px] mr-[9px] bg-[#d3d5d9]"></span>
            <button aria-label="View" class="mr-2"><svg class="w-6 h-5"><use href="#axes"/></svg></button>
            <svg class="w-[10px] h-[7px] mr-[17px]"><use href="#caret"/></svg>
            <span class="w-px h-[22px] mr-2 bg-[#d3d5d9]"></span>
            <button aria-label="Grid" class="mr-[9px] w-[26px] h-[25px] flex items-center justify-center rounded-sm border-2 border-[#3f6896] bg-linear-to-b from-[#9fb9d6] to-[#d8e9f8]"><svg class="w-4 h-4"><use href="#grid"/></svg></button>
            <button aria-label="Scene" class="mr-[11px]"><svg class="w-5 h-5"><use href="#aperture"/></svg></button>
            <svg class="w-[10px] h-[7px] mr-[18px]"><use href="#caret"/></svg>
            <button aria-label="Snapshot" class="mr-3"><svg class="w-[18px] h-4"><use href="#camera"/></svg></button>
            <button aria-label="Print"><svg class="w-5 h-5"><use href="#printer"/></svg></button>
          </div>
          <svg id="plot" class="block w-full bg-white font-['DejaVu_Sans',sans-serif]" viewBox="993 272 622 450" font-size="16"></svg>
        </section>

        <!-- Messages -->
        <section class="flex-1 flex flex-col bg-[#fafcfe] border border-b-2 border-[#d3d6da]">
          <div class="flex items-stretch h-10 pt-[6px] border-b border-[#d3d6da] text-lg leading-[22px]">
            <div class="relative top-px flex items-center ml-[5px] mr-[11px] pl-[6px] w-[129px] bg-[#fafcfe] border border-b-0 border-[#d3d6da]">
              <button class="text-[#34558f]">Messages</button>
              <svg class="w-[14px] h-[14px] ml-3" viewBox="0 0 12 12"><path d="M1 1l10 10M11 1L1 11" stroke="#d0d5de" stroke-width="1.500"/></svg>
            </div>
            <button class="w-[89px] mr-[10px] bg-[#ececec]">Progress</button>
            <button class="w-[45px] mr-3 bg-[#ececec]">Log</button>
            <div class="flex items-center w-[104px] pl-[6px] bg-[#ececec]">
              <button>Table 1</button>
              <svg class="w-[14px] h-[14px] ml-[14px]" viewBox="0 0 12 12"><path d="M1 1l10 10M11 1L1 11" stroke="#d0d5de" stroke-width="1.500"/></svg>
            </div>
            <div class="flex items-center ml-auto pr-[5px] gap-[9px] text-[#4b4d50]">
              <svg class="w-3 h-[7px]"><use href="#caret"/></svg>
              <svg class="w-3 h-4"><use href="#pin"/></svg>
            </div>
          </div>
          <div class="h-10 pl-[9px] pt-[10px]"><button aria-label="Clear messages"><svg class="w-6 h-6"><use href="#broom"/></svg></button></div>
          <div class="flex-1 flex flex-col mx-[5px] mb-[6px] border border-t-2 border-[#d3d6da] overflow-hidden whitespace-nowrap">
            <p class="pl-[3px]">COMSOL Multiphysics 5.6.0.280</p>
            <p class="pl-[3px]">[Nov 23, 2024 7:48 PM] Opened file: D:\Document\Data cloud\Comsol\授课</p>
            <div class="mt-auto flex h-[25px]">
              <span class="w-[25px] flex items-center justify-center bg-[#f5f6f8]"><svg class="w-2 h-3" viewBox="0 0 8 12"><path d="M7 1L2 6l5 5" fill="none" stroke="#c4c5c8" stroke-width="2"/></svg></span>
              <span class="w-[383px] bg-[#e4e4e6]"></span>
              <span class="flex-1"></span>
              <span class="w-[25px] flex items-center justify-center bg-[#f5f6f8]"><svg class="w-2 h-3" viewBox="0 0 8 12"><path d="M1 1l5 5-5 5" fill="none" stroke="#c4c5c8" stroke-width="2"/></svg></span>
            </div>
          </div>
        </section>
      </div>
    </main>

    <!-- Status bar -->
    <footer class="flex items-center h-[45px] pl-[666px] pt-[10px] border-b-2 border-[#b3b4b7]">373 MB | 3122 MB</footer>

    <!-- Taskbar -->
    <div class="flex items-center h-[67px] pl-[21px] pr-[29px] pb-px bg-linear-to-r from-[#fbe9df] via-[#e2dde9] via-38% to-[#d9dada]">
      <div id="taskbar" class="flex items-center"></div>
      <div class="ml-auto flex items-center">
        <svg class="w-4 h-[10px] mr-[27px]" viewBox="0 0 16 10"><path d="M1 9l7-7 7 7" fill="none" stroke="#1d1d1d" stroke-width="1.700"/></svg>
        <svg class="w-[22px] h-6 mr-6"><use href="#t-red"/></svg>
        <svg class="w-[18px] h-6 mr-[25px]"><use href="#t-mic"/></svg>
        <svg class="w-5 h-[22px] mr-8"><use href="#t-font"/></svg>
        <svg class="w-6 h-6 mr-[30px]"><use href="#t-sogou"/></svg>
        <svg class="w-6 h-5 mr-2"><use href="#t-wifi"/></svg>
        <svg class="w-6 h-5 mr-[10px]"><use href="#t-vol"/></svg>
        <svg class="w-6 h-5 mr-6"><use href="#t-bat"/></svg>
        <div class="text-base leading-[22px] text-right text-[#1d1d1d]">
          <div>21:12</div>
          <div>2024/11/23</div>
        </div>
        <svg class="w-5 h-[22px] ml-3"><use href="#t-bell"/></svg>
      </div>
    </div>

    <!-- Floating overlays: recording timer, side gauge, mouse pointer -->
    <div class="absolute left-[1195px] top-4 w-[66px] h-[66px] rounded-full border-[3px] border-white shadow bg-linear-to-tr from-[#5fbdf8] to-[#3585f5] flex items-center justify-center text-lg text-white">08:35</div>
    <div class="absolute right-0 top-[633px] w-3 h-[72px] rounded-full border-[3px] border-[#828487] bg-white flex flex-col justify-end"><span class="h-[25px] rounded-full bg-[#5b9fe8]"></span></div>
    <svg class="absolute left-[228px] top-[474px] w-3 h-5" viewBox="0 0 12 20"><path d="M1 1v15l4-3 3 6 2-1-2-6h4z" fill="#fff" stroke="#8a8d91" stroke-width=".8"/></svg>

    <script>
      const svg = (id, size) => `<svg class="${size}"><use href="#${id}"/></svg>`;
      const $ = (id) => document.getElementById(id);

      // Quick access toolbar
      const quick = ['new', 'open', 'save', 'saveas', 'play', 'undo', 'redo', 'copy', 'paste', 'dup', 'trash', 'select', 'clearsel', 'find'];
      $('quick').innerHTML = quick.map((id) => `
        <button aria-label="${id}" class="flex-1 flex justify-center -mt-1">${svg(id, 'w-[22px] h-[22px]')}</button>
      `).join('');

      // Model Builder toolbar
      const treebar = [
        ['aleft', 'w-[18px] h-[18px] text-[#3589c9]'],
        ['aleft', 'w-[18px] h-[18px] rotate-180 text-[#c3c5c8]'],
        ['aup', 'w-[18px] h-[18px] text-[#b3b5b8]'],
        ['aup', 'w-[18px] h-[18px] rotate-180 text-[#c3c5c8]'],
        ['eye', 'w-[18px] h-[18px]'],
        ['collapse', 'w-6 h-5'],
        ['expand', 'w-6 h-5'],
        ['cols', 'w-[22px] h-5'],
      ];
      $('treebar').innerHTML = treebar.map(([id, size]) => `
        <button aria-label="${id}" class="w-[33px] flex justify-center">${svg(id, size)}</button>
      `).join('') + svg('caret', 'w-[10px] h-[7px] text-[#4b4d50]');

      // [level, arrow, icon, label, tag, row background]
      const tree = [
        [0, 'open', 'root', '第七课 光子晶体超胞计算.mph', '(root)'],
        [1, 'open', 'globe', 'Global Definitions'],
        [2, '', 'pi', 'Parameters 1', '', 'bg-[#d9d9db]'],
        [2, '', 'globmat', 'Materials'],
        [1, 'open', 'comp', 'Component 1', '(comp1)'],
        [2, 'shut', 'defs', 'Definitions'],
        [2, 'shut', 'compasses', 'Geometry 1'],
        [2, 'shut', 'cubes', 'Materials', '', 'bg-[#e1f0fc]'],
        [2, 'shut', 'wave', 'Electromagnetic Waves, Frequency'],
        [2, 'shut', 'mesh', 'Mesh 1'],
        [1, 'open', 'glasses', 'Study 1'],
        [2, '', 'sweep', 'Parametric Sweep'],
        [2, '', 'eigen', '&nbsp; Step 1: Eigenfrequency'],
        [2, 'shut', 'solver', 'Solver Configurations'],
        [2, 'shut', 'job', 'Job Configurations'],
        [1, 'open', 'results', 'Results'],
        [2, 'shut', 'datasets', 'Datasets'],
        [2, 'shut', 'derived', 'Derived Values'],
        [2, 'shut', 'tables', 'Tables'],
        [2, 'shut', 'square', 'Electric Field (ewfd)'],
        [2, 'shut', 'square', 'Electric Field (ewfd) 1'],
        [2, 'open', 'sine', '1D Plot Group 3'],
        [3, '', 'global', 'Global 1'],
        [2, '', 'export', 'Export'],
        [2, '', 'reports', 'Reports'],
      ];
      const indent = ['pl-0', 'pl-[28px]', 'pl-[56px]', 'pl-[84px]'];
      const arrows = {
        '': '',
        open: '<svg class="w-[10px] h-[10px] mb-1" viewBox="0 0 10 10"><path d="M10 0v10H0z" fill="#3f4144"/></svg>',
        shut: '<svg class="w-[10px] h-[14px]" viewBox="0 0 8 12"><path d="M1 1l6 5-6 5z" fill="#fff" stroke="#8a8c90"/></svg>',
      };
      const sizes = { cubes: 'w-4 h-4', glasses: 'w-[22px] h-5', root: 'w-6 h-5', globmat: 'w-6 h-6', mesh: 'w-[22px] h-5', wave: 'w-[22px] h-5', pi: 'w-6 h-[22px]', sweep: 'w-[22px] h-[22px]', derived: 'w-[22px] h-5', job: 'w-[22px] h-6' };
      $('tree').innerHTML = tree.map(([level, arrow, icon, label, tag, bg]) => `
        <li class="flex items-center min-h-0 whitespace-nowrap overflow-hidden ${indent[level]} ${bg || ''}">
          <span class="w-6 shrink-0 flex justify-center">${arrows[arrow]}</span>
          <span class="w-7 mr-[6px] shrink-0 flex justify-center">${svg(icon, sizes[icon] || 'w-5 h-5')}</span>
          <span>${label}</span>${tag ? `<i class="ml-[10px]">${tag}</i>` : ''}
        </li>
      `).join('');

      // Parameter table
      const params = [
        ['a', '0.58[um]', '5.8E-7 m', 'Lattice constant'],
        ['n_h', '3.4', '3.4', 'Refractive index of'],
        ['n_l', '1', '1', 'Refractive index of'],
        ['r', '0.18*a', '1.044E-7 m', 'Radius of the GaAs'],
        ['omega0', '0.353*2*pi*c_c...', '1.1464E15 1/s', 'Angular frequency'],
        ['f0', 'omega0/2/pi', '1.8246E14 1/s', 'Frequency'],
        ['k0x', 'pi/(41*a)', '1.3211E5 1/m', ''],
        ['k0y', 'pi/a', '5.4165E6 1/m', ''],
        ['k', '1', '1', 'Path wavevector'],
        ['kx', 'k0x*0', '0 1/m', ''],
        ['', '', '', ''],
      ];
      $('params').innerHTML = params.map(([name, expr, value, desc], i) => `
        <tr class="h-[26px] border-b border-[#a9abae] whitespace-nowrap">
          <td class="p-0 pl-1 overflow-hidden ${i ? '' : 'bg-[#bfe0fa] outline-2 -outline-offset-2 outline-[#3a86c8]'}">${name}</td>
          <td class="p-0 pl-1 overflow-hidden border-l border-[#a9abae]">${expr}</td>
          <td class="p-0 pl-1 overflow-hidden border-l border-[#a9abae] bg-[#efefef]">${value}</td>
          <td class="p-0 pl-1 overflow-hidden border-l border-[#a9abae]">${desc}</td>
        </tr>
      `).join('');

      // Graphics plot
      const X = (um) => 1070 + um * 17.4;
      const Y = (um) => 508.5 - um * 17.35;
      let plot = `<svg x="1580" y="281" width="30" height="28"><use href="#logo"/></svg>
        <g font-size="17">
          <text x="1013" y="309">k(5)=0.4 Eigenfrequency=2.0699E14 Hz</text>
          <text x="1368" y="309">Surface: Electric field norm (V</text>
        </g>
        <text x="997" y="330"><tspan font-family="DejaVu Serif" font-style="italic" font-size="18">μ</tspan>m</text>
        <text x="1464" y="713"><tspan font-family="DejaVu Serif" font-style="italic" font-size="18">μ</tspan>m</text>
        <rect x="1055.5" y="321.5" width="433" height="374" fill="none" stroke="#6d6f72"/>`;
      for (const x of [0, 5, 10, 15, 20]) {
        plot += `<path d="M${X(x)} 322v7M${X(x)} 695v-7" stroke="#6d6f72"/>
          <text x="${X(x)}" y="717" text-anchor="middle">${x}</text>`;
      }
      for (let y = -10; y <= 10; y += 2) {
        plot += `<path d="M1056 ${Y(y)}h7M1488 ${Y(y)}h-8" stroke="#6d6f72"/>`;
        if (y < 10) plot += `<text x="1049" y="${Y(y) + 6}" text-anchor="end">${y}</text>`;
      }
      plot += `<rect x="1065.500" y="503.500" width="413" height="10" fill="#0000e8" stroke="#000040"/>
        <rect x="1252" y="504" width="40" height="9" fill="url(#g-mode)"/>`;
      for (let i = 0; i < 41; i++) {
        if (i === 20) continue;
        plot += `<ellipse cx="${X(0) + i * 10.07}" cy="508.5" rx="1.800" ry="2.200" fill="none" stroke="#000030"/>`;
      }
      plot += '<rect x="1517.5" y="362" width="21" height="327" fill="url(#g-jet)" stroke="#333" stroke-width=".6"/>';
      for (let v = 1; v <= 8; v++) {
        const y = 689 - v * 38.9;
        plot += `<path d="M1518 ${y}h4M1534 ${y}h4" stroke="#222"/><text x="1549" y="${y + 6}">${v}</text>`;
      }
      $('plot').innerHTML = plot;

      // Taskbar
      const apps = [
        ['w-start', 'w-[34px] h-[34px]', ''],
        ['w-tasks', 'w-[34px] h-[34px]', ''],
        ['w-store', 'w-[34px] h-[34px]', ''],
        ['w-rdp', 'w-[34px] h-[34px]', ''],
        ['w-files', 'w-[34px] h-[30px]', 'w-2 bg-[#8a8085]'],
        ['w-edge', 'w-[34px] h-[34px]', 'w-2 bg-[#8a8085]'],
        ['logo', 'w-8 h-8', 'w-[22px] bg-[#1573c4]'],
        ['w-wps', 'w-[34px] h-6', 'w-2 bg-[#8a8085]'],
      ];
      $('taskbar').innerHTML = apps.map(([id, size, mark]) => `
        <button aria-label="${id}" class="relative w-12 h-[54px] mr-[14px] flex items-center justify-center rounded ${id === 'logo' ? 'bg-[#f8f1f5] shadow' : ''}">
          ${svg(id, size)}
          <span class="absolute bottom-0 h-1 rounded-full ${mark}"></span>
        </button>
      `).join('');
    </script>
  </body>
</html>
